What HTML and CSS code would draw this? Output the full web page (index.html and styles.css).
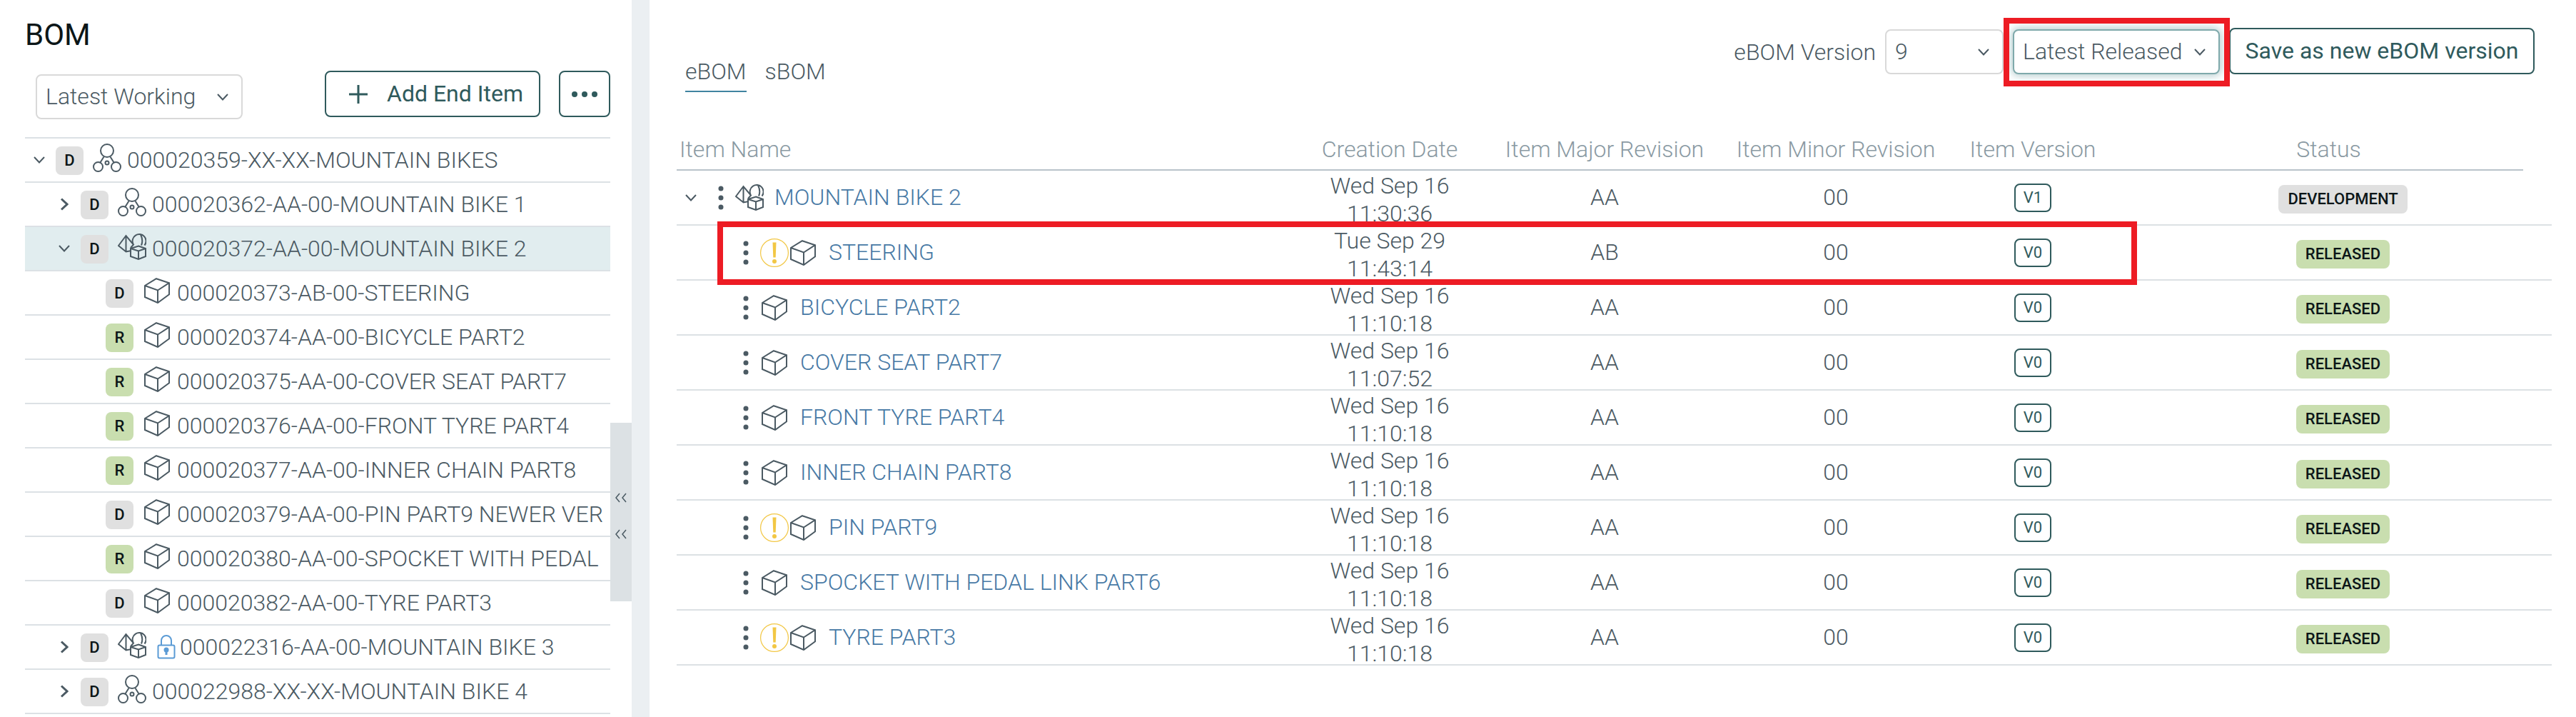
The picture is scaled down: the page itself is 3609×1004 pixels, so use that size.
FILE: index.html
```html
<!DOCTYPE html>
<html lang="en">
<head>
    <meta charset="UTF-8">
    <title>BOM</title>
    <link rel="stylesheet" href="styles.css">
</head>
<body>
    <!-- Icon set -->
    <svg class="sprite" aria-hidden="true">
        <symbol id="i-down" viewBox="0 0 16 10"><path d="M1 1l7 7.500l7-7.500"/></symbol>
        <symbol id="i-right" viewBox="0 0 12 18"><path d="M2 1.500l8 7.500l-8 7.500" stroke-width="3"/></symbol>
        <symbol id="i-group" viewBox="0 0 40 40">
            <circle cx="20" cy="10" r="9"/><circle cx="7.500" cy="32.500" r="6.500"/><circle cx="32.500" cy="32.500" r="6.500"/>
            <circle cx="20" cy="27" r="2.500"/><path d="M15.500 18.500l-5 8M24.500 18.500l5 8"/>
        </symbol>
        <symbol id="i-assembly" viewBox="0 0 40 37">
            <path d="M19 24l-7.500 1.500L1 17L11.500 3L22 15.500L18 20M11.500 3v22"/>
            <path d="M21.500 14.500A9.500 9.500 0 1 1 37.500 16.500M32 1.500q4 8 1 15"/>
            <path d="M29 17.500l10 3.500v11l-10 4l-11-4V21zM18 21l11 3.500L39 21M29 24.500V36"/>
        </symbol>
        <symbol id="i-cube" viewBox="0 0 36 36"><path d="M17 1.200l18 6v16L19 35L1 27V11zM1 11l18 6.500L35 7.200M19 17.500V35"/></symbol>
        <symbol id="i-lock" viewBox="0 0 26 34">
            <rect x="1.500" y="14.500" width="23" height="18" rx="2"/><path d="M6 14V8a7 7 0 0 1 14 0v6"/>
            <circle cx="13" cy="21" r="2.500" fill="currentColor"/><path d="M13 22v6" stroke-width="3"/>
        </symbol>
        <symbol id="i-kebab" viewBox="0 0 8 34"><g fill="currentColor" stroke="none"><circle cx="4" cy="4" r="3.500"/><circle cx="4" cy="17" r="3.500"/><circle cx="4" cy="30" r="3.500"/></g></symbol>
        <symbol id="i-dots" viewBox="0 0 36 8"><g fill="currentColor" stroke="none"><circle cx="4" cy="4" r="4"/><circle cx="18" cy="4" r="4"/><circle cx="32" cy="4" r="4"/></g></symbol>
        <symbol id="i-warn" viewBox="0 0 40 40">
            <circle cx="20" cy="20" r="19.400" stroke-width="1.200"/>
            <path d="M17.500 5.500h5l-.8 21h-3.400z" fill="currentColor" stroke="none"/><circle cx="20" cy="32" r="3" fill="currentColor" stroke="none"/>
        </symbol>
        <symbol id="i-plus" viewBox="0 0 26 26"><path d="M13 0v26M0 13h26" stroke-width="3"/></symbol>
        <symbol id="i-collapse" viewBox="0 0 18 14"><path d="M7 1L2 7l5 6M16 1l-5 6l5 6" stroke-width="1.500"/></symbol>
    </svg>

    <aside class="sidebar">
        <h1>BOM</h1>
        <div class="toolbar">
            <div class="select">
                <select class="select-working" aria-label="Configuration"><option>Latest Working</option></select>
                <svg class="down"><use href="#i-down"/></svg>
            </div>
            <div class="actions">
                <button class="btn btn-add"><svg class="plus"><use href="#i-plus"/></svg>Add End Item</button>
                <button class="btn btn-more" aria-label="More"><svg class="dots"><use href="#i-dots"/></svg></button>
            </div>
        </div>

        <ul class="tree">
            <li class="node"><button class="toggle" aria-label="Collapse"><svg class="down"><use href="#i-down"/></svg></button><span class="tag">D</span><svg class="group"><use href="#i-group"/></svg><span class="label">000020359-XX-XX-MOUNTAIN BIKES</span></li>
            <li class="node level-1"><button class="toggle" aria-label="Expand"><svg class="right"><use href="#i-right"/></svg></button><span class="tag">D</span><svg class="group"><use href="#i-group"/></svg><span class="label">000020362-AA-00-MOUNTAIN BIKE 1</span></li>
            <li class="node level-1 selected"><button class="toggle" aria-label="Collapse"><svg class="down"><use href="#i-down"/></svg></button><span class="tag">D</span><svg class="assembly"><use href="#i-assembly"/></svg><span class="label">000020372-AA-00-MOUNTAIN BIKE 2</span></li>
            <li class="node level-2"><span class="tag">D</span><svg class="cube"><use href="#i-cube"/></svg><span class="label">000020373-AB-00-STEERING</span></li>
            <li class="node level-2"><span class="tag released">R</span><svg class="cube"><use href="#i-cube"/></svg><span class="label">000020374-AA-00-BICYCLE PART2</span></li>
            <li class="node level-2"><span class="tag released">R</span><svg class="cube"><use href="#i-cube"/></svg><span class="label">000020375-AA-00-COVER SEAT PART7</span></li>
            <li class="node level-2"><span class="tag released">R</span><svg class="cube"><use href="#i-cube"/></svg><span class="label">000020376-AA-00-FRONT TYRE PART4</span></li>
            <li class="node level-2"><span class="tag released">R</span><svg class="cube"><use href="#i-cube"/></svg><span class="label">000020377-AA-00-INNER CHAIN PART8</span></li>
            <li class="node level-2"><span class="tag">D</span><svg class="cube"><use href="#i-cube"/></svg><span class="label">000020379-AA-00-PIN PART9 NEWER VER</span></li>
            <li class="node level-2"><span class="tag released">R</span><svg class="cube"><use href="#i-cube"/></svg><span class="label">000020380-AA-00-SPOCKET WITH PEDAL</span></li>
            <li class="node level-2"><span class="tag">D</span><svg class="cube"><use href="#i-cube"/></svg><span class="label">000020382-AA-00-TYRE PART3</span></li>
            <li class="node level-1"><button class="toggle" aria-label="Expand"><svg class="right"><use href="#i-right"/></svg></button><span class="tag">D</span><svg class="assembly"><use href="#i-assembly"/></svg><svg class="lock"><use href="#i-lock"/></svg><span class="label">000022316-AA-00-MOUNTAIN BIKE 3</span></li>
            <li class="node level-1"><button class="toggle" aria-label="Expand"><svg class="right"><use href="#i-right"/></svg></button><span class="tag">D</span><svg class="group"><use href="#i-group"/></svg><span class="label">000022988-XX-XX-MOUNTAIN BIKE 4</span></li>
        </ul>

        <button class="handle" aria-label="Collapse panel">
            <svg class="collapse"><use href="#i-collapse"/></svg>
            <svg class="collapse"><use href="#i-collapse"/></svg>
        </button>
    </aside>

    <main class="content">
        <div class="topbar">
            <nav class="tabs">
                <a href="#ebom" class="active">eBOM</a>
                <a href="#sbom">sBOM</a>
            </nav>
            <div class="version-bar">
                <label for="version">eBOM Version</label>
                <div class="select">
                    <select id="version" class="select-version"><option>9</option></select>
                    <svg class="down"><use href="#i-down"/></svg>
                </div>
                <div class="select marked">
                    <select class="select-released" aria-label="Release filter"><option>Latest Released</option></select>
                    <svg class="down"><use href="#i-down"/></svg>
                </div>
                <button class="btn btn-save">Save as new eBOM version</button>
            </div>
        </div>

        <table>
            <thead>
                <tr><th>Item Name</th><th>Creation Date</th><th>Item Major Revision</th><th>Item Minor Revision</th><th>Item Version</th><th>Status</th></tr>
            </thead>
            <tbody>
                <tr>
                    <td class="root"><button class="toggle" aria-label="Collapse"><svg class="down"><use href="#i-down"/></svg></button><svg class="kebab"><use href="#i-kebab"/></svg><svg class="assembly"><use href="#i-assembly"/></svg><a href="#">MOUNTAIN BIKE 2</a></td>
                    <td>Wed Sep 16 11:30:36</td><td>AA</td><td>00</td><td><span class="ver">V1</span></td><td><span class="status">DEVELOPMENT</span></td>
                </tr>
                <tr class="marked-row">
                    <td><svg class="kebab"><use href="#i-kebab"/></svg><svg class="warn"><use href="#i-warn"/></svg><svg class="cube"><use href="#i-cube"/></svg><a href="#">STEERING</a></td>
                    <td>Tue Sep 29 11:43:14</td><td>AB</td><td>00</td><td><span class="ver">V0</span></td><td><span class="status released">RELEASED</span></td>
                </tr>
                <tr>
                    <td><svg class="kebab"><use href="#i-kebab"/></svg><svg class="cube"><use href="#i-cube"/></svg><a href="#">BICYCLE PART2</a></td>
                    <td>Wed Sep 16 11:10:18</td><td>AA</td><td>00</td><td><span class="ver">V0</span></td><td><span class="status released">RELEASED</span></td>
                </tr>
                <tr>
                    <td><svg class="kebab"><use href="#i-kebab"/></svg><svg class="cube"><use href="#i-cube"/></svg><a href="#">COVER SEAT PART7</a></td>
                    <td>Wed Sep 16 11:07:52</td><td>AA</td><td>00</td><td><span class="ver">V0</span></td><td><span class="status released">RELEASED</span></td>
                </tr>
                <tr>
                    <td><svg class="kebab"><use href="#i-kebab"/></svg><svg class="cube"><use href="#i-cube"/></svg><a href="#">FRONT TYRE PART4</a></td>
                    <td>Wed Sep 16 11:10:18</td><td>AA</td><td>00</td><td><span class="ver">V0</span></td><td><span class="status released">RELEASED</span></td>
                </tr>
                <tr>
                    <td><svg class="kebab"><use href="#i-kebab"/></svg><svg class="cube"><use href="#i-cube"/></svg><a href="#">INNER CHAIN PART8</a></td>
                    <td>Wed Sep 16 11:10:18</td><td>AA</td><td>00</td><td><span class="ver">V0</span></td><td><span class="status released">RELEASED</span></td>
                </tr>
                <tr>
                    <td><svg class="kebab"><use href="#i-kebab"/></svg><svg class="warn"><use href="#i-warn"/></svg><svg class="cube"><use href="#i-cube"/></svg><a href="#">PIN PART9</a></td>
                    <td>Wed Sep 16 11:10:18</td><td>AA</td><td>00</td><td><span class="ver">V0</span></td><td><span class="status released">RELEASED</span></td>
                </tr>
                <tr>
                    <td><svg class="kebab"><use href="#i-kebab"/></svg><svg class="cube"><use href="#i-cube"/></svg><a href="#">SPOCKET WITH PEDAL LINK PART6</a></td>
                    <td>Wed Sep 16 11:10:18</td><td>AA</td><td>00</td><td><span class="ver">V0</span></td><td><span class="status released">RELEASED</span></td>
                </tr>
                <tr>
                    <td><svg class="kebab"><use href="#i-kebab"/></svg><svg class="warn"><use href="#i-warn"/></svg><svg class="cube"><use href="#i-cube"/></svg><a href="#">TYRE PART3</a></td>
                    <td>Wed Sep 16 11:10:18</td><td>AA</td><td>00</td><td><span class="ver">V0</span></td><td><span class="status released">RELEASED</span></td>
                </tr>
            </tbody>
        </table>
    </main>
</body>
</html>
```
FILE: styles.css
```css
* {
    box-sizing: border-box;
}

body {
    margin: 0;
    min-height: 100vh;
    display: flex;
    background: #fff;
    color: #4b5a63;
    font-family: Roboto, "Liberation Sans", sans-serif;
    font-size: 32px;
    font-weight: 300;
    line-height: 39px;
}

svg {
    flex: none;
    fill: none;
    stroke: currentColor;
    stroke-width: 2;
}

.sprite {
    position: absolute;
    width: 0;
    height: 0;
}

.down {
    width: 16px;
    height: 10px;
}

.right {
    width: 12px;
    height: 18px;
}

.group {
    width: 40px;
    height: 40px;
}

.assembly {
    width: 40px;
    height: 37px;
}

.cube {
    width: 36px;
    height: 36px;
}

.lock {
    width: 26px;
    height: 34px;
    color: #5b9bd5;
}

.kebab {
    width: 8px;
    height: 34px;
}

.dots {
    width: 36px;
    height: 8px;
}

.plus {
    width: 26px;
    height: 26px;
}

.warn {
    width: 40px;
    height: 40px;
    color: #f2c744;
}

.collapse {
    width: 18px;
    height: 14px;
}

button,
select {
    font: inherit;
    color: inherit;
    background: none;
    border: none;
    margin: 0;
    padding: 0;
    cursor: pointer;
}

a {
    color: inherit;
    text-decoration: none;
}

/* Controls */
.select {
    position: relative;
}

.select select {
    appearance: none;
    display: block;
    height: 63px;
    padding: 0 12px;
    border: 2px solid #d9d9d9;
    border-radius: 8px;
    background: #fff;
}

.select .down {
    position: absolute;
    right: 20px;
    top: 27px;
    pointer-events: none;
}

.select .select-working {
    width: 290px;
}

.select .select-version {
    width: 166px;
}

.select .select-released {
    width: 290px;
    border-color: #7fa9ab;
    box-shadow: 0 0 12px 2px rgba(127, 169, 171, 0.6);
}

.btn {
    height: 65px;
    border: 2px solid #2f5a5c;
    border-radius: 8px;
    background: #fff;
    color: #2f5a5c;
    font-weight: 400;
    display: flex;
    align-items: center;
    justify-content: center;
}

.btn-add {
    width: 302px;
    padding-left: 10px;
    gap: 27px;
}

.btn-more {
    width: 72px;
}

.btn-save {
    width: 428px;
}

.marked::after,
.marked-row::after {
    content: "";
    position: absolute;
    border: 8px solid #ed1c24;
    pointer-events: none;
    z-index: 1;
}

.marked::after {
    inset: -16px -14px -17px -13px;
}

/* Left panel */
.sidebar {
    position: relative;
    flex: none;
    width: 910px;
    padding: 24px 30px 0 35px;
    border-right: 25px solid #ebeff2;
}

h1 {
    margin: 0;
    font-size: 42px;
    font-weight: 400;
    line-height: 50px;
    color: #0c1618;
}

.toolbar {
    display: flex;
    justify-content: space-between;
    align-items: flex-end;
    padding: 25px 0 0 15px;
}

.actions {
    display: flex;
    gap: 26px;
    padding-bottom: 3px;
}

.tree {
    list-style: none;
    margin: 25px 0 0;
    padding: 0;
    border-top: 2px solid #dce1e5;
}

.node {
    display: flex;
    align-items: center;
    height: 62px;
    padding-left: 6px;
    border-bottom: 2px solid #dce1e5;
    white-space: nowrap;
    overflow: hidden;
}

.level-1 {
    padding-left: 41px;
}

.level-2 {
    padding-left: 113px;
}

.selected {
    background: #e1edef;
}

.toggle {
    flex: none;
    width: 28px;
    height: 28px;
    margin-right: 9px;
    display: flex;
    align-items: center;
    justify-content: center;
}

.tag {
    flex: none;
    width: 39px;
    height: 40px;
    margin: 2px 13px 0 0;
    border-radius: 8px;
    background: #e0e0e0;
    color: #0c1618;
    font-size: 22px;
    font-weight: 500;
    line-height: 40px;
    text-align: center;
}

.node .group,
.node .assembly {
    margin: 0 8px 6px 0;
}

.node .cube {
    margin: 0 10px 6px 2px;
}

.node .lock {
    margin: 0 6px 0 7px;
}

.released {
    background: #c9deaf;
}

.handle {
    position: absolute;
    right: 0;
    top: 592px;
    width: 30px;
    height: 250px;
    padding-top: 10px;
    display: flex;
    flex-direction: column;
    align-items: center;
    justify-content: center;
    gap: 37px;
    background: #dce1e4;
}

/* Right panel */
.content {
    flex: 1;
    min-width: 0;
    padding: 39px 34px 0 38px;
}

.topbar {
    display: flex;
    justify-content: space-between;
    align-items: flex-start;
    padding: 0 24px 0 12px;
}

.tabs {
    display: flex;
    gap: 26px;
    padding-top: 42px;
}

.tabs a {
    padding-bottom: 7px;
    border-bottom: 2px solid transparent;
}

.tabs .active {
    border-color: #4084a0;
}

.version-bar {
    display: flex;
    align-items: center;
    gap: 13px;
}

.version-bar label {
    padding-top: 3px;
}

.version-bar .select {
    margin-top: 2px;
}

table,
thead,
tbody {
    display: block;
}

table {
    margin-top: 50px;
}

tr {
    position: relative;
    display: grid;
    grid-template-columns: 860px 278px 324px 324px 228px 1fr;
    grid-template-rows: 75px;
    align-items: center;
    border-bottom: 2px solid #dce1e4;
}

thead tr {
    grid-template-rows: 58px;
    margin-right: 40px;
    border-bottom-color: #b9c3ca;
    color: #8a9aa3;
}

th,
td {
    padding: 0;
    font-weight: 300;
    text-align: center;
}

th {
    padding-top: 2px;
}

th:first-child {
    padding-left: 4px;
    text-align: left;
}

th:last-child,
td:last-child {
    padding-left: 28px;
}

/* the two date lines are taller than the row */
td:nth-child(2) {
    padding: 7px 40px 0;
}

td:first-child {
    display: flex;
    align-items: center;
    padding-left: 93px;
}

td.root:first-child {
    padding-left: 6px;
}

td .toggle {
    margin-right: 24px;
}

.kebab {
    margin-right: 16px;
}

td .cube {
    margin: 0 18px 0 2px;
}

td .assembly {
    margin-right: 15px;
}

td a {
    color: #4779a5;
}

.ver,
.status {
    display: inline-block;
    vertical-align: middle;
    height: 40px;
    border-radius: 8px;
    font-size: 22px;
}

.ver {
    width: 52px;
    border: 2px solid #2f5a5c;
    color: #2f5a5c;
    font-weight: 400;
    line-height: 36px;
}

.status {
    padding: 0 13px;
    margin-top: 4px;
    background: #e0e0e0;
    color: #0c1618;
    font-weight: 500;
    line-height: 40px;
}

.status.released {
    background: #c9deaf;
}

.marked-row::after {
    left: 57px;
    right: 581px;
    top: -6px;
    bottom: -8px;
}
```
